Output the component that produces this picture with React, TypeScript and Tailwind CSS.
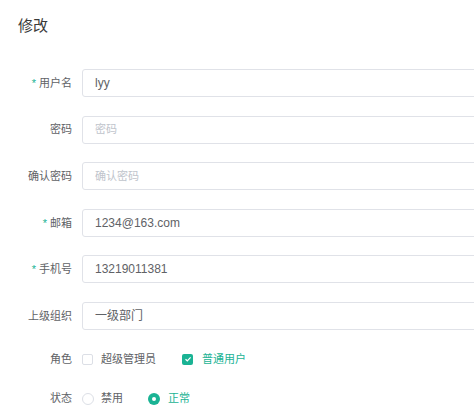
import React from "react";

const font = { fontFamily: '"Liberation Sans", "Noto Sans CJK SC", sans-serif' };

function Row({ label, required, children }: { label: string; required?: boolean; children: React.ReactNode }) {
  return (
    <div className="flex items-center">
      <div className="w-[82px] shrink-0 pr-[10px] text-right text-[11px] text-[#606266]">
        {required && <span className="mr-[3px] text-[#1ab394]">*</span>}
        {label}
      </div>
      {children}
    </div>
  );
}

function Input({ value, placeholder }: { value?: string; placeholder?: string }) {
  return (
    <div className="flex h-[28px] w-[420px] shrink-0 items-center rounded-[3px] border border-[#e0e2e8] bg-white pl-[12px] text-[12px]">
      {value ? (
        <span className="text-[#606266]">{value}</span>
      ) : (
        <span className="text-[11px] text-[#c0c4cc]">{placeholder}</span>
      )}
    </div>
  );
}

export default function App() {
  return (
    <div className="h-[415px] w-[474px] overflow-hidden bg-white" style={font}>
      <div className="pt-[16px]">
        <div className="pl-[18px] text-[15px] leading-[20px] text-[#3a3a3a]">修改</div>
        <div className="mt-[33px] flex flex-col gap-[18.6px]">
          <Row label="用户名" required>
            <Input value="lyy" />
          </Row>
          <Row label="密码">
            <Input placeholder="密码" />
          </Row>
          <Row label="确认密码">
            <Input placeholder="确认密码" />
          </Row>
          <Row label="邮箱" required>
            <Input value="1234@163.com" />
          </Row>
          <Row label="手机号" required>
            <Input value="13219011381" />
          </Row>
          <Row label="上级组织">
            <Input value="一级部门" />
          </Row>
          <div className="flex h-[21px] items-center">
            <div className="w-[82px] shrink-0 pr-[10px] text-right text-[11px] text-[#606266]">角色</div>
            <div className="flex items-center text-[11px]">
              <span className="box-border h-[11px] w-[11px] rounded-[2px] border border-[#dcdfe6] bg-white" />
              <span className="ml-[8px] text-[#606266]">超级管理员</span>
              <span className="ml-[26px] flex h-[11px] w-[11px] items-center justify-center rounded-[2px] bg-[#1ab394]">
                <svg width="8" height="8" viewBox="0 0 8 8">
                  <path d="M1.5 4.2 L3.3 5.8 L6.6 2.3" stroke="white" strokeWidth="1.2" fill="none" />
                </svg>
              </span>
              <span className="ml-[9px] text-[#1ab394]">普通用户</span>
            </div>
          </div>
          <div className="flex h-[21px] items-center">
            <div className="w-[82px] shrink-0 pr-[10px] text-right text-[11px] text-[#606266]">状态</div>
            <div className="flex items-center text-[11px]">
              <span className="box-border h-[12px] w-[12px] rounded-full border border-[#dcdfe6] bg-white" />
              <span className="ml-[7px] text-[#606266]">禁用</span>
              <span className="ml-[25px] flex h-[12px] w-[12px] items-center justify-center rounded-full bg-[#1ab394]">
                <span className="h-[4px] w-[4px] rounded-full bg-white" />
              </span>
              <span className="ml-[8px] text-[#1ab394]">正常</span>
            </div>
          </div>
        </div>
      </div>
    </div>
  );
}
